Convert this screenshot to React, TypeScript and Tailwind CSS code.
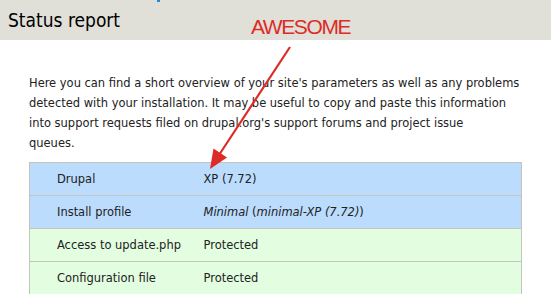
import React from "react";

const rows = [
  { label: "Drupal", value: <>XP (7.72)</>, tone: "info" },
  {
    label: "Install profile",
    value: (
      <>
        <em>Minimal</em> (<em>minimal-XP (7.72)</em>)
      </>
    ),
    tone: "info",
  },
  { label: "Access to update.php", value: <>Protected</>, tone: "ok" },
  { label: "Configuration file", value: <>Protected</>, tone: "ok" },
];

export default function App() {
  return (
    <div
      className="relative w-[551px] h-[294px] overflow-hidden bg-white text-[#222]"
      style={{ fontFamily: '"DejaVu Sans Condensed", "DejaVu Sans", Verdana, sans-serif' }}
    >
      <div className="h-[40px] bg-[#e0dfd8] flex flex-col">
        <div className="h-[2px] flex">
          <span className="ml-[157px] w-[3px] h-[2px] bg-[#2a86d6]" />
        </div>
        <h1 className="pl-[8px] pt-[7px] text-[19px] leading-[22px] font-normal text-black">
          Status report
        </h1>
      </div>

      <p className="ml-[29px] w-[510px] mt-[33px] text-[12.75px] leading-[20px] text-[#222]">
        Here you can find a short overview of your site's parameters as well as any problems
        <br />
        detected with your installation. It may be useful to copy and paste this information
        <br />
        into support requests filed on drupal.org's support forums and project issue
        <br />
        queues.
      </p>

      <table className="ml-[29px] mt-[9px] w-[493px] border-collapse text-[12.75px]">
        <tbody>
          {rows.map((r) => (
            <tr
              key={r.label}
              className={r.tone === "info" ? "bg-[#bbdcfd]" : "bg-[#e2fde0]"}
            >
              <td className="border-y border-l border-[#c4c3bc] h-[33px] pl-[27px] w-[174px] align-middle">
                {r.label}
              </td>
              <td className="border-y border-r border-[#c4c3bc] h-[33px] align-middle">
                {r.value}
              </td>
            </tr>
          ))}
        </tbody>
      </table>

      <div
        className="absolute left-[251px] top-[14px] text-[21px] leading-[25px] tracking-[-1.4px] text-[#dd2c27]"
        style={{ fontFamily: '"Liberation Sans", Arial, sans-serif' }}
      >
        AWESOME
      </div>

      <svg className="absolute left-0 top-0" width="551" height="294" viewBox="0 0 551 294">
        <line x1="290" y1="47" x2="219" y2="155" stroke="#dd2c27" strokeWidth="2.2" />
        <polygon points="210,169 213.5,148.5 227,157.5" fill="#dd2c27" />
      </svg>
    </div>
  );
}
